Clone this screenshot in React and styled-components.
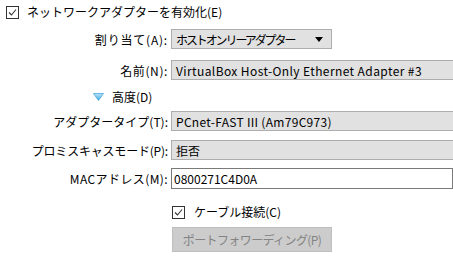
import styled, { createGlobalStyle } from "styled-components";

const Global = createGlobalStyle`
    html, body {
        margin: 0;
        padding: 0;
        background: #ffffff;
    }
    body {
        font-family: "Noto Sans CJK JP", "Noto Sans", sans-serif;
        font-size: 12px;
        color: #000000;
    }
`

const Frame = styled.div`
    width: 453px;
    height: 268px;
    overflow: hidden;
    display: flex;
    flex-direction: column;
`
const Check = styled.label`
    display: flex;
    align-items: center;
    gap: ${p => p.$gap || 8}px;
    height: 16px;
    margin-top: ${p => p.$top}px;
    padding-left: ${p => p.$left}px;
    line-height: 16px;
    white-space: nowrap;
`
const Box = styled.span`
    width: 13px;
    height: 13px;
    box-sizing: border-box;
    border: 1px solid #333333;
    background: #ffffff;
    display: flex;
    align-items: center;
    justify-content: center;
`
const Row = styled.div`
    display: grid;
    grid-template-columns: 171px 1fr;
    align-items: center;
    height: ${p => p.$h || 20}px;
    margin-top: ${p => p.$top}px;
`
const Label = styled.span`
    text-align: right;
    padding-right: 3px;
    white-space: nowrap;
    letter-spacing: ${p => p.$ls || 0}px;
`
const Field = styled.div`
    height: ${p => p.$h || 20}px;
    box-sizing: border-box;
    border: 1px solid ${p => (p.$white ? "#7a7a7a" : "#adadad")};
    border-right: ${p => (p.$open ? "none" : "")};
    background: ${p => (p.$white ? "#ffffff" : "#e1e1e1")};
    padding-left: ${p => (p.$white ? 2 : 4)}px;
    display: flex;
    align-items: center;
    white-space: nowrap;
    overflow: hidden;
    letter-spacing: ${p => p.$ls || 0}px;
`
const Combo = styled(Field)`
    width: 161px;
    justify-content: space-between;
    padding-right: 8px;
`
const Kana = styled.span`
    letter-spacing: -2.1px;
`
const Toggle = styled.div`
    grid-column: 1 / span 2;
    display: flex;
    align-items: center;
    gap: 8px;
    padding-left: 93px;
`
const Button = styled.div`
    width: 160px;
    height: 25px;
    box-sizing: border-box;
    margin-left: 172px;
    margin-top: ${p => p.$top}px;
    border: 1px solid #bfbfbf;
    background: #cccccc;
    color: #838383;
    display: flex;
    align-items: center;
    justify-content: center;
    white-space: nowrap;
    letter-spacing: -0.6px;
`

function Tick() {
    return (
        <Box>
            <svg width="11" height="11" viewBox="0 0 11 11">
                <path d="M2 5.5 L4.5 8 L9 2.5" fill="none" stroke="#333" strokeWidth="1.1" />
            </svg>
        </Box>
    )
}

export default function App() {
    return <Frame>
        <Global />
        <Check $top={4} $left={6}>
            <Tick />
            <span>ネットワークアダプターを有効化(E)</span>
        </Check>
        <Row $top={9}>
            <Label $ls={0.8}>割り当て(A):</Label>
            <Combo>
                <Kana>ホストオンリーアダプター</Kana>
                <svg width="8" height="5" viewBox="0 0 8 5">
                    <path d="M0 0 H8 L4 5 Z" fill="#000" />
                </svg>
            </Combo>
        </Row>
        <Row $top={11}>
            <Label $ls={0.6}>名前(N):</Label>
            <Field $open $ls={0.4}>VirtualBox Host-Only Ethernet Adapter #3</Field>
        </Row>
        <Row $top={8} $h={16}>
            <Toggle>
                <svg width="11" height="8" viewBox="0 0 11 8">
                    <defs>
                        <linearGradient id="tri" x1="0" y1="0" x2="0" y2="1">
                            <stop offset="0" stopColor="#bfe6fb" />
                            <stop offset="1" stopColor="#39a6e0" />
                        </linearGradient>
                    </defs>
                    <path d="M0.5 0.5 H10.5 L5.5 7.5 Z" fill="url(#tri)" stroke="#4aa8dc" strokeWidth="0.8" />
                </svg>
                <span>高度(D)</span>
            </Toggle>
        </Row>
        <Row $top={7}>
            <Label>アダプタータイプ(T):</Label>
            <Field $open $ls={0.3}>PCnet-FAST III (Am79C973)</Field>
        </Row>
        <Row $top={9}>
            <Label $ls={-0.2}>プロミスキャスモード(P):</Label>
            <Field $open>拒否</Field>
        </Row>
        <Row $top={8} $h={21}>
            <Label $ls={0.4}>MACアドレス(M):</Label>
            <Field $white $h={21}>0800271C4D0A</Field>
        </Row>
        <Check $top={15} $left={172} $gap={9}>
            <Tick />
            <span>ケーブル接続(C)</span>
        </Check>
        <Button $top={7}>ポートフォワーディング(P)</Button>
    </Frame>
}
